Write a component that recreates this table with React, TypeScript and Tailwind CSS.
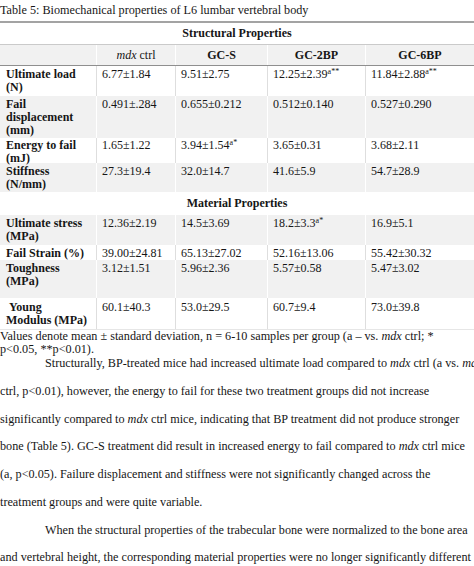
import React from 'react';

const grid = 'grid grid-cols-[96px_79px_92px_98px_1fr]';

function Sup({ t }: { t: string }) {
  return <sup className="text-[8px] top-[-0.55em]">{t}</sup>;
}

type Row = {
  label: React.ReactNode[];
  values: React.ReactNode[];
  shaded: boolean;
  h: string;
  pt?: string;
};

const structural: Row[] = [
  {
    label: ['Ultimate load', '(N)'],
    values: ['6.77±1.84', '9.51±2.75', <>12.25±2.39<Sup t="a**" /></>, <>11.84±2.88<Sup t="a**" /></>],
    shaded: false,
    h: 'h-[30px]',
  },
  {
    label: ['Fail', 'displacement', '(mm)'],
    values: ['0.491±.284', '0.655±0.212', '0.512±0.140', '0.527±0.290'],
    shaded: true,
    h: 'h-[42px]',
  },
  {
    label: ['Energy to fail', '(mJ)'],
    values: ['1.65±1.22', <>3.94±1.54<Sup t="a*" /></>, '3.65±0.31', '3.68±2.11'],
    shaded: false,
    h: 'h-[25px]',
    pt: 'pt-[1px]',
  },
  {
    label: ['Stiffness', '(N/mm)'],
    values: ['27.3±19.4', '32.0±14.7', '41.6±5.9', '54.7±28.9'],
    shaded: true,
    h: 'h-[29px]',
  },
];

const material: Row[] = [
  {
    label: ['Ultimate stress', '(MPa)'],
    values: ['12.36±2.19', '14.5±3.69', <>18.2±3.3<Sup t="a*" /></>, '16.9±5.1'],
    shaded: true,
    h: 'h-[30px]',
  },
  {
    label: ['Fail Strain (%)'],
    values: ['39.00±24.81', '65.13±27.02', '52.16±13.06', '55.42±30.32'],
    shaded: false,
    h: 'h-[15px]',
  },
  {
    label: ['Toughness', '(MPa)'],
    values: ['3.12±1.51', '5.96±2.36', '5.57±0.58', '5.47±3.02'],
    shaded: true,
    h: 'h-[38px]',
  },
  {
    label: [<span className="pl-[3px]">Young</span>, 'Modulus (MPa)'],
    values: ['60.1±40.3', '53.0±29.5', '60.7±9.4', '73.0±39.8'],
    shaded: false,
    h: 'h-[31px]',
    pt: 'pt-[3px]',
  },
];

function DataRow({ row }: { row: Row }) {
  const sep = row.shaded ? 'border-white' : 'border-[#dedede]';
  return (
    <div className={`${grid} ${row.h} ${row.shaded ? 'bg-[#f1f1f1]' : 'bg-white'}`}>
      <div className={`pl-[6px] font-bold ${row.pt ?? 'pt-[2px]'}`}>
        {row.label.map((l, i) => (
          <div key={i}>{l}</div>
        ))}
      </div>
      {row.values.map((v, i) => (
        <div key={i} className={`border-l ${sep} pl-[5px] ${row.pt ?? 'pt-[2px]'}`}>
          {v}
        </div>
      ))}
    </div>
  );
}

function Mdx() {
  return <i>mdx</i>;
}

export default function App() {
  return (
    <div className="w-[474px] h-[566px] overflow-hidden bg-white text-[#161616] font-['Liberation_Serif','Times_New_Roman',serif]">
      {/* Caption */}
      <div className="text-[12.2px] leading-[17px] pt-[2px]">Table 5: Biomechanical properties of L6 lumbar vertebral body</div>

      {/* Table */}
      <div className="mt-[2px] text-[12px] leading-[13px]">
        <div className="h-[2px] bg-[#a3a3a3]" />
        <div className="h-[21px] flex items-center justify-center font-bold">Structural Properties</div>
        <div className={`${grid} h-[22px] bg-[#f1f1f1] border-t border-[#cacaca] border-b border-b-[#8f8f8f] font-bold items-center text-center`}>
          <div />
          <div className="border-l border-white h-full flex items-center justify-center font-normal">
            <span>
              <Mdx /> ctrl
            </span>
          </div>
          <div className="border-l border-white h-full flex items-center justify-center">GC-S</div>
          <div className="border-l border-white h-full flex items-center justify-center">GC-2BP</div>
          <div className="border-l border-white h-full flex items-center justify-center">GC-6BP</div>
        </div>
        {structural.map((r, i) => (
          <DataRow key={i} row={r} />
        ))}
        <div className="h-[23px] flex items-center justify-center font-bold">Material Properties</div>
        {material.map((r, i) => (
          <DataRow key={i} row={r} />
        ))}
        <div className="h-px bg-[#e6e6e6]" />
      </div>

      {/* Footnote */}
      <div className="text-[12.2px] leading-[13px] whitespace-nowrap">
        <div>
          Values denote mean ± standard deviation, n = 6-10 samples per group (a – vs. <Mdx /> ctrl; *
        </div>
        <div>p&lt;0.05, **p&lt;0.01).</div>
      </div>

      {/* Body text */}
      <div className="text-[12.2px] whitespace-nowrap overflow-hidden">
        <div className="leading-[14px] pl-[45px]">
          Structurally, BP-treated mice had increased ultimate load compared to <Mdx /> ctrl (a vs. <Mdx />
        </div>
        <div className="mt-[8px] leading-[27.7px]">
          <div>ctrl, p&lt;0.01), however, the energy to fail for these two treatment groups did not increase</div>
          <div>
            significantly compared to <Mdx /> ctrl mice, indicating that BP treatment did not produce stronger
          </div>
          <div>
            bone (Table 5). GC-S treatment did result in increased energy to fail compared to <Mdx /> ctrl mice
          </div>
          <div>(a, p&lt;0.05). Failure displacement and stiffness were not significantly changed across the</div>
          <div>treatment groups and were quite variable.</div>
          <div className="pl-[45px]">
            When the structural properties of the trabecular bone were normalized to the bone area
          </div>
          <div>and vertebral height, the corresponding material properties were no longer significantly different</div>
        </div>
      </div>
    </div>
  );
}
